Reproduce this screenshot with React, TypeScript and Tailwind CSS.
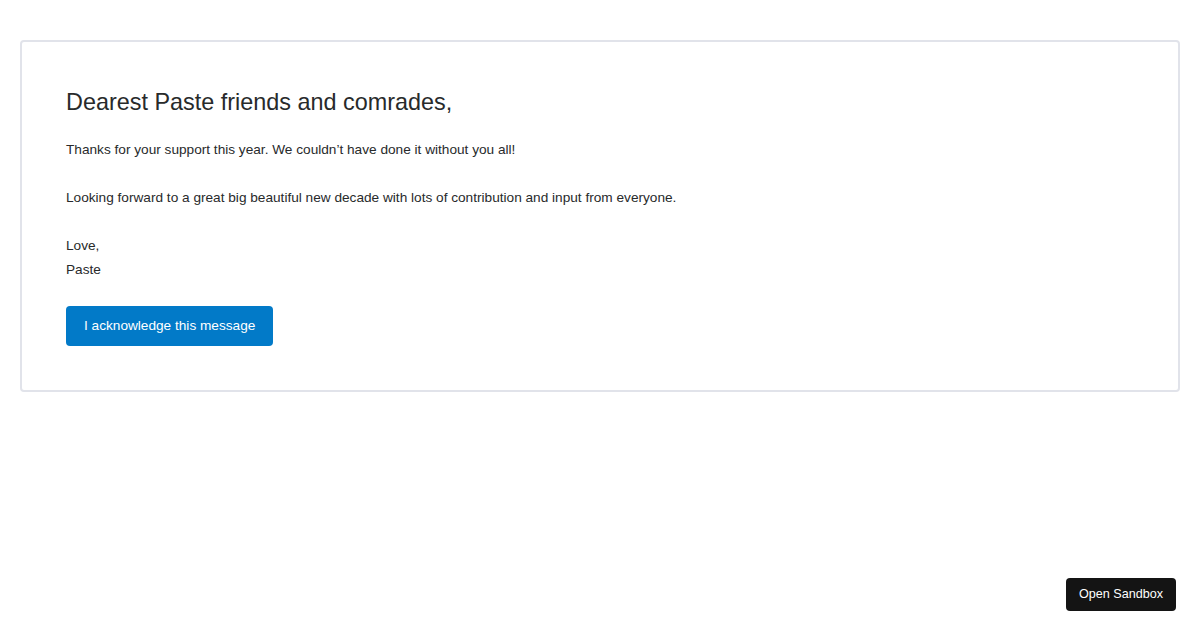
import React from "react";

export default function App() {
  return (
    <div className="relative min-h-screen bg-white px-5 pt-10 text-[#282a2b] font-['Liberation_Sans',Arial,sans-serif]">
      {/* Message card */}
      <div className="rounded border-2 border-[#e1e3ea] px-[44px] pt-[44px] pb-[44px]">
        <h1 className="text-[23.4px] leading-8 mb-5 font-normal">Dearest Paste friends and comrades,</h1>
        <p className="text-[13.65px] leading-6 mb-6">
          Thanks for your support this year. We couldn’t have done it without you all!
        </p>
        <p className="text-[13.65px] leading-6 mb-6">
          Looking forward to a great big beautiful new decade with lots of contribution and input from everyone.
        </p>
        <p className="text-[13.65px] leading-6 mb-6">
          Love,
          <br />
          Paste
        </p>
        <button className="h-10 rounded bg-[#027ac8] px-[18px] text-[13.65px] text-white">
          I acknowledge this message
        </button>
      </div>

      {/* Sandbox link */}
      <button className="fixed right-6 bottom-[19px] h-[33px] rounded bg-[#141414] px-[13px] text-[12.6px] text-white">
        Open Sandbox
      </button>
    </div>
  );
}
